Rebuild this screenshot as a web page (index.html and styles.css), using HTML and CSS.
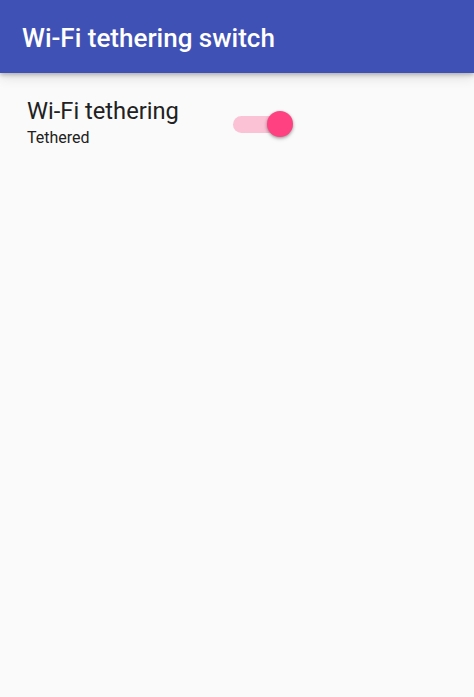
FILE: index.html
```html
<!DOCTYPE html>
<html>
<head>
<meta charset="utf-8">
<link rel="stylesheet" href="styles.css">
</head>
<body>
<header class="appbar">
  <h1 class="title">Wi-Fi tethering switch</h1>
</header>
<main class="content">
  <div class="row">
    <div class="texts">
      <div class="primary">Wi-Fi tethering</div>
      <div class="secondary">Tethered</div>
    </div>
    <div class="switch">
      <div class="track"></div>
      <div class="thumb"></div>
    </div>
  </div>
</main>
</body>
</html>
```
FILE: styles.css
```css
html, body {
  margin: 0;
  padding: 0;
  height: 100%;
}
body {
  background: #fafafa;
  font-family: Roboto, "Noto Sans", sans-serif;
  overflow: hidden;
}
.appbar {
  height: 73px;
  box-sizing: border-box;
  background: #3f51b5;
  display: flex;
  align-items: center;
  padding-left: 22px;
  padding-top: 3px;
  box-shadow: 0 2px 4px rgba(0,0,0,0.22), 0 4px 12px rgba(0,0,0,0.12);
  position: relative;
  z-index: 1;
}
.title {
  margin: 0;
  color: #fff;
  font-size: 26px;
  font-weight: 500;
  line-height: 30px;
}
.content {
  padding-top: 24px;
}
.row {
  display: flex;
  align-items: center;
  padding-left: 27px;
}
.texts {
  width: 206px;
}
.primary {
  font-size: 23.7px;
  line-height: 28px;
  color: #212121;
}
.secondary {
  font-size: 16px;
  line-height: 26px;
  color: #212121;
}
.switch {
  position: relative;
  width: 60px;
  height: 26px;
}
.track {
  position: absolute;
  left: 0;
  top: 5px;
  width: 50px;
  height: 17px;
  border-radius: 9px;
  background: rgba(255, 64, 129, 0.3);
}
.thumb {
  position: absolute;
  left: 34px;
  top: 0;
  width: 26px;
  height: 26px;
  border-radius: 50%;
  background: #ff4081;
  box-shadow: 0 1px 3px rgba(0,0,0,0.3), 0 2px 4px rgba(0,0,0,0.15);
}
```
